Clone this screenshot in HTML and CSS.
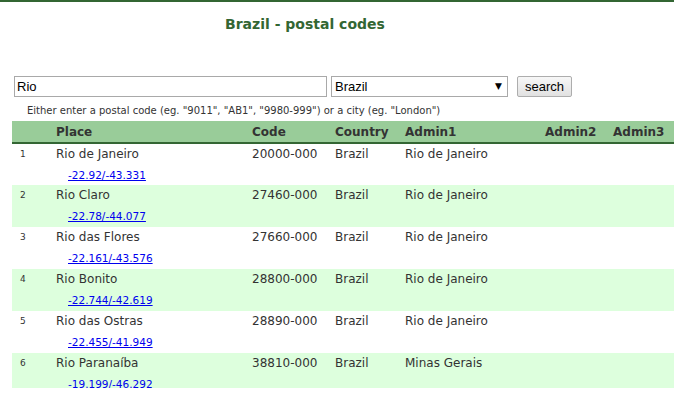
FILE: index.html
```html
<!DOCTYPE html>
<html>
<head>
<meta charset="utf-8">
<title>Brazil - postal codes</title>
<link rel="stylesheet" href="styles.css">
</head>
<body>
<div class="topbar"></div>
<h1 class="title">Brazil - postal codes</h1>
<form class="search">
  <input class="query" type="text" value="Rio">
  <div class="select-wrap">
    <select class="country"><option>Brazil</option></select>
  </div>
  <button class="btn" type="button">search</button>
</form>
<p class="hint">Either enter a postal code (eg. "9011", "AB1", "9980-999") or a city (eg. "London")</p>
<div class="results">
<table class="grid">
  <colgroup>
    <col class="c-num"><col class="c-place"><col class="c-code"><col class="c-country"><col class="c-a1"><col class="c-a2"><col class="c-a3">
  </colgroup>
  <thead>
    <tr><th></th><th>Place</th><th>Code</th><th>Country</th><th>Admin1</th><th>Admin2</th><th>Admin3</th></tr>
  </thead>
  <tbody>
    <tr><td class="num">1</td><td>Rio de Janeiro<div class="geo"><a href="#">-22.92/-43.331</a></div></td><td>20000-000</td><td>Brazil</td><td>Rio de Janeiro</td><td></td><td></td></tr>
    <tr class="odd"><td class="num">2</td><td>Rio Claro<div class="geo"><a href="#">-22.78/-44.077</a></div></td><td>27460-000</td><td>Brazil</td><td>Rio de Janeiro</td><td></td><td></td></tr>
    <tr><td class="num">3</td><td>Rio das Flores<div class="geo"><a href="#">-22.161/-43.576</a></div></td><td>27660-000</td><td>Brazil</td><td>Rio de Janeiro</td><td></td><td></td></tr>
    <tr class="odd"><td class="num">4</td><td>Rio Bonito<div class="geo"><a href="#">-22.744/-42.619</a></div></td><td>28800-000</td><td>Brazil</td><td>Rio de Janeiro</td><td></td><td></td></tr>
    <tr><td class="num">5</td><td>Rio das Ostras<div class="geo"><a href="#">-22.455/-41.949</a></div></td><td>28890-000</td><td>Brazil</td><td>Rio de Janeiro</td><td></td><td></td></tr>
    <tr class="odd"><td class="num">6</td><td>Rio Paranaíba<div class="geo"><a href="#">-19.199/-46.292</a></div></td><td>38810-000</td><td>Brazil</td><td>Minas Gerais</td><td></td><td></td></tr>
  </tbody>
</table>
</div>
</body>
</html>
```
FILE: styles.css
```css
html, body {
  margin: 0;
  padding: 0;
  background: #fff;
}
body {
  font-family: "DejaVu Sans", Verdana, sans-serif;
  color: #333;
  overflow: hidden;
}
.topbar {
  height: 2px;
  background: #336633;
}
.title {
  margin: 0;
  padding: 12px 0 0 225px;
  font-size: 14px;
  line-height: 20px;
  font-weight: bold;
  color: #336633;
}
.search {
  display: flex;
  align-items: flex-start;
  margin: 42px 0 0 14px;
}
.query {
  box-sizing: border-box;
  width: 313px;
  height: 21px;
  margin: 0;
  padding: 0 2px;
  border: 1px solid #a9a9a9;
  font: 13px "Liberation Sans", Arial, sans-serif;
  color: #000;
  outline: none;
}
.select-wrap {
  position: relative;
  margin-left: 4px;
}
.select-wrap::after {
  content: "\25BC";
  position: absolute;
  right: 6px;
  top: 5px;
  font: 9px "DejaVu Sans", sans-serif;
  color: #000;
  pointer-events: none;
}
.country {
  box-sizing: border-box;
  width: 177px;
  height: 21px;
  margin: 0;
  padding: 0 0 0 3px;
  border: 1px solid #a9a9a9;
  background: #fff;
  font: 13px "Liberation Sans", Arial, sans-serif;
  color: #000;
  appearance: none;
  -webkit-appearance: none;
  border-radius: 0;
}
.btn {
  box-sizing: border-box;
  height: 21px;
  width: 55px;
  margin: 0 0 0 9px;
  padding: 0;
  border: 1px solid #adadad;
  border-radius: 2px;
  background: linear-gradient(#f7f7f7, #e1e1e1);
  font: 13px "Liberation Sans", Arial, sans-serif;
  color: #000;
}
.hint {
  margin: 8px 0 0 27px;
  font-size: 10px;
  line-height: 12px;
  color: #333;
}
.results {
  margin: 4px 0 0 12px;
  width: 662px;
  height: 267px;
  overflow: hidden;
}
.grid {
  width: 662px;
  border-collapse: collapse;
  table-layout: fixed;
  font-size: 12px;
}
.c-num { width: 40px; }
.c-place { width: 196px; }
.c-code { width: 83px; }
.c-country { width: 70px; }
.c-a1 { width: 140px; }
.c-a2 { width: 68px; }
.c-a3 { width: 65px; }
.grid th {
  height: 21px;
  padding: 0 0 0 4px;
  background: #99cc99;
  border-bottom: 2px solid #336633;
  text-align: left;
  font-weight: bold;
  font-size: 12px;
  color: #333;
}
.grid td {
  height: 42px;
  box-sizing: border-box;
  padding: 2px 0 0 4px;
  vertical-align: top;
  line-height: 16px;
  white-space: nowrap;
}
.grid tr.odd td {
  background: #ddffdd;
}
.grid td.num {
  padding: 4px 0 0 8px;
  font-size: 9px;
  line-height: 12px;
}
.geo {
  margin: 7px 0 0 12px;
  font-size: 10.5px;
  line-height: 13px;
}
.geo a {
  color: #0000ee;
  text-decoration: underline;
}
```
